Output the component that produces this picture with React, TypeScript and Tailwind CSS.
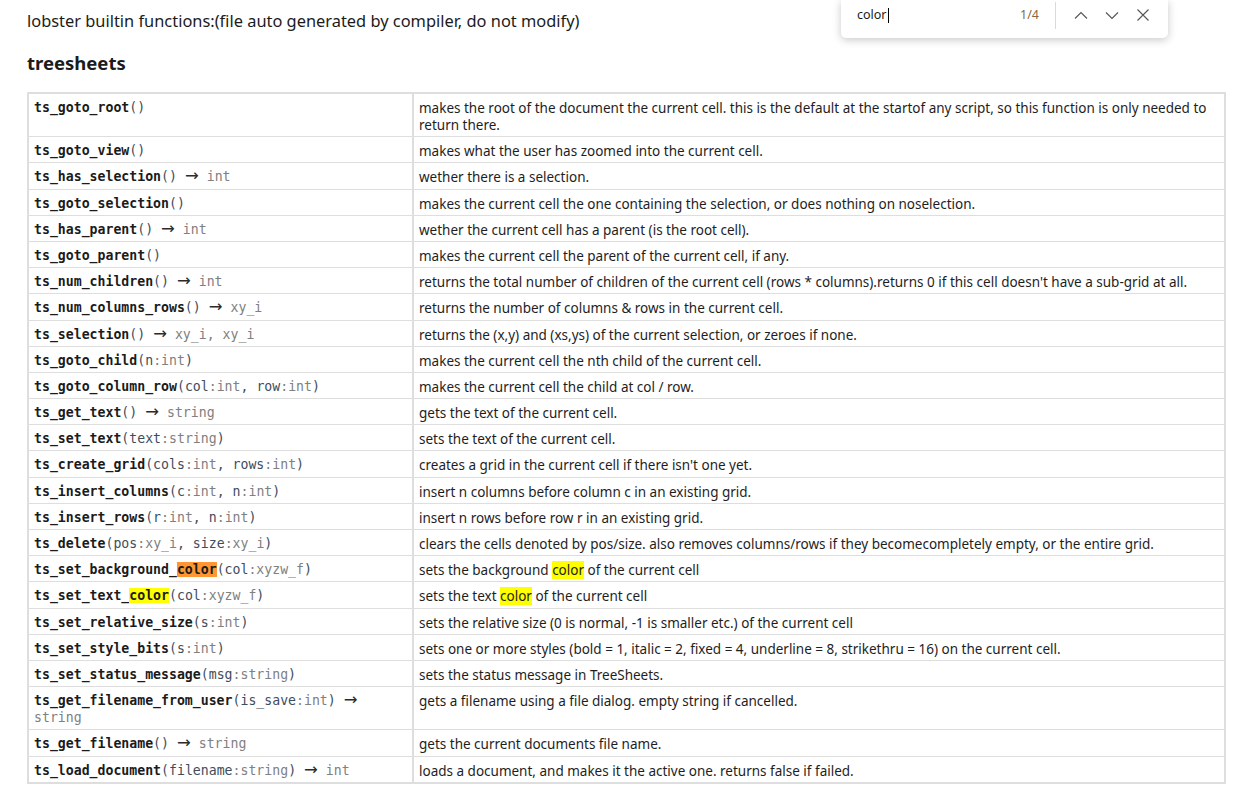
type Param = [string, string];

interface Fn {
  name: string;
  params?: Param[];
  ret?: string;
  desc: string;
  hl?: "orange" | "yellow";
}

const FUNCS: Fn[] = [
  {
    name: "ts_goto_root",
    desc: "makes the root of the document the current cell. this is the default at the startof any script, so this function is only needed to^return there.",
  },
  { name: "ts_goto_view", desc: "makes what the user has zoomed into the current cell." },
  { name: "ts_has_selection", ret: "int", desc: "wether there is a selection." },
  { name: "ts_goto_selection", desc: "makes the current cell the one containing the selection, or does nothing on noselection." },
  { name: "ts_has_parent", ret: "int", desc: "wether the current cell has a parent (is the root cell)." },
  { name: "ts_goto_parent", desc: "makes the current cell the parent of the current cell, if any." },
  {
    name: "ts_num_children",
    ret: "int",
    desc: "returns the total number of children of the current cell (rows * columns).returns 0 if this cell doesn't have a sub-grid at all.",
  },
  { name: "ts_num_columns_rows", ret: "xy_i", desc: "returns the number of columns & rows in the current cell." },
  { name: "ts_selection", ret: "xy_i, xy_i", desc: "returns the (x,y) and (xs,ys) of the current selection, or zeroes if none." },
  { name: "ts_goto_child", params: [["n", "int"]], desc: "makes the current cell the nth child of the current cell." },
  {
    name: "ts_goto_column_row",
    params: [
      ["col", "int"],
      ["row", "int"],
    ],
    desc: "makes the current cell the child at col / row.",
  },
  { name: "ts_get_text", ret: "string", desc: "gets the text of the current cell." },
  { name: "ts_set_text", params: [["text", "string"]], desc: "sets the text of the current cell." },
  {
    name: "ts_create_grid",
    params: [
      ["cols", "int"],
      ["rows", "int"],
    ],
    desc: "creates a grid in the current cell if there isn't one yet.",
  },
  {
    name: "ts_insert_columns",
    params: [
      ["c", "int"],
      ["n", "int"],
    ],
    desc: "insert n columns before column c in an existing grid.",
  },
  {
    name: "ts_insert_rows",
    params: [
      ["r", "int"],
      ["n", "int"],
    ],
    desc: "insert n rows before row r in an existing grid.",
  },
  {
    name: "ts_delete",
    params: [
      ["pos", "xy_i"],
      ["size", "xy_i"],
    ],
    desc: "clears the cells denoted by pos/size. also removes columns/rows if they becomecompletely empty, or the entire grid.",
  },
  {
    name: "ts_set_background_",
    params: [["col", "xyzw_f"]],
    desc: "sets the background |color| of the current cell",
    hl: "orange",
  },
  {
    name: "ts_set_text_",
    params: [["col", "xyzw_f"]],
    desc: "sets the text |color| of the current cell",
    hl: "yellow",
  },
  { name: "ts_set_relative_size", params: [["s", "int"]], desc: "sets the relative size (0 is normal, -1 is smaller etc.) of the current cell" },
  {
    name: "ts_set_style_bits",
    params: [["s", "int"]],
    desc: "sets one or more styles (bold = 1, italic = 2, fixed = 4, underline = 8, strikethru = 16) on the current cell.",
  },
  { name: "ts_set_status_message", params: [["msg", "string"]], desc: "sets the status message in TreeSheets." },
  {
    name: "ts_get_filename_from_user",
    params: [["is_save", "int"]],
    ret: "string",
    desc: "gets a filename using a file dialog. empty string if cancelled.",
  },
  { name: "ts_get_filename", ret: "string", desc: "gets the current documents file name." },
  {
    name: "ts_load_document",
    params: [["filename", "string"]],
    ret: "int",
    desc: "loads a document, and makes it the active one. returns false if failed.",
  },
];

function Signature({ fn }: { fn: Fn }) {
  const params = fn.params ?? [];
  return (
    <>
      <span className="font-bold text-[#1b1b1b]">{fn.name}</span>
      {fn.hl && (
        <span className={`font-bold text-[#1b1b1b] ${fn.hl === "orange" ? "bg-[#ff9632]" : "bg-[#ffff00]"}`}>
          color
        </span>
      )}
      <span className="text-[#3e4d5c]">(</span>
      {params.map(([n, t], i) => (
        <span key={n}>
          {i > 0 && <span className="text-[#3e4d5c]">, </span>}
          <span className="text-[#3e4d5c]">{n}</span>
          <span className="text-[#808080]">:{t}</span>
        </span>
      ))}
      <span className="text-[#3e4d5c]">)</span>
      {fn.ret && (
        <>
          {" "}
          <span className="font-['DejaVu_Sans',sans-serif] text-[16.5px] leading-[0] text-[#2b2b2b]">→</span>{" "}
          <span className="text-[#808080]">{fn.ret}</span>
        </>
      )}
    </>
  );
}

function Desc({ text }: { text: string }) {
  const lines = text.split("^");
  return (
    <>
      {lines.map((line, li) => (
        <span key={li}>
          {li > 0 && <br />}
          {line.split("|").map((p, i) =>
            i % 2 === 1 ? (
              <span key={i} className="bg-[#ffff00]">
                {p}
              </span>
            ) : (
              <span key={i}>{p}</span>
            )
          )}
        </span>
      ))}
    </>
  );
}

function FindBar() {
  return (
    <div className="absolute left-[841px] top-0 flex h-[38px] w-[327px] items-start rounded-b-[5px] bg-white pl-[16px] pr-[18px] pt-[6px] shadow-[0_2px_8px_rgba(0,0,0,0.22)]">
      <div className="flex h-[18px] flex-1 items-center text-[12.5px] text-[#1b1b1b]">
        color<span className="ml-[1px] inline-block h-[15px] w-[1px] bg-black" />
      </div>
      <span className="mr-[16px] h-[18px] text-[12.5px] leading-[18px] text-[#8a6a3c]">1/4</span>
      <div className="-mt-[4px] h-[27px] w-px bg-[#dadada]" />
      <div className="flex h-[18px] items-center gap-[17px] pl-[18px] text-[#555]">
        <svg width="14" height="18" viewBox="0 0 14 18" fill="none" stroke="currentColor" strokeWidth="1.1">
          <path d="M1 12.5 7 6.5 13 12.5" />
        </svg>
        <svg width="14" height="18" viewBox="0 0 14 18" fill="none" stroke="currentColor" strokeWidth="1.1">
          <path d="M1 6.5 7 12.5 13 6.5" />
        </svg>
        <svg width="14" height="18" viewBox="0 0 14 18" fill="none" stroke="currentColor" strokeWidth="1.1">
          <path d="M1.5 3.5 12.5 14.5M12.5 3.5 1.5 14.5" />
        </svg>
      </div>
    </div>
  );
}

export default function App() {
  return (
    <div className="relative min-h-[798px] bg-white pl-[27px] pr-[20px] font-['Noto_Sans',sans-serif] text-[#1b1b1b]">
      <p className="pt-[8px] text-[16.4px] leading-[26px]">
        lobster builtin functions:(file auto generated by compiler, do not modify)
      </p>
      <h2 className="mt-[15px] text-[18.5px] font-bold leading-[28px]">treesheets</h2>
      <table className="mt-[15px] w-[1199px] border-collapse border-2 border-[#dedede]">
        <tbody>
          {FUNCS.map((fn) => (
            <tr key={fn.name + (fn.hl ?? "")}>
              <td className="w-[385px] border border-r-2 border-[#dedede] px-[5px] pb-[3.2px] pt-[5px] align-top font-['DejaVu_Sans_Mono',monospace] text-[13.2px] leading-[17px]">
                <Signature fn={fn} />
              </td>
              <td className="border border-[#dedede] px-[5px] pb-[2.2px] pt-[6px] align-top text-[13.5px] leading-[17px] text-[#1e1e1e]">
                <Desc text={fn.desc} />
              </td>
            </tr>
          ))}
        </tbody>
      </table>
      <FindBar />
    </div>
  );
}
